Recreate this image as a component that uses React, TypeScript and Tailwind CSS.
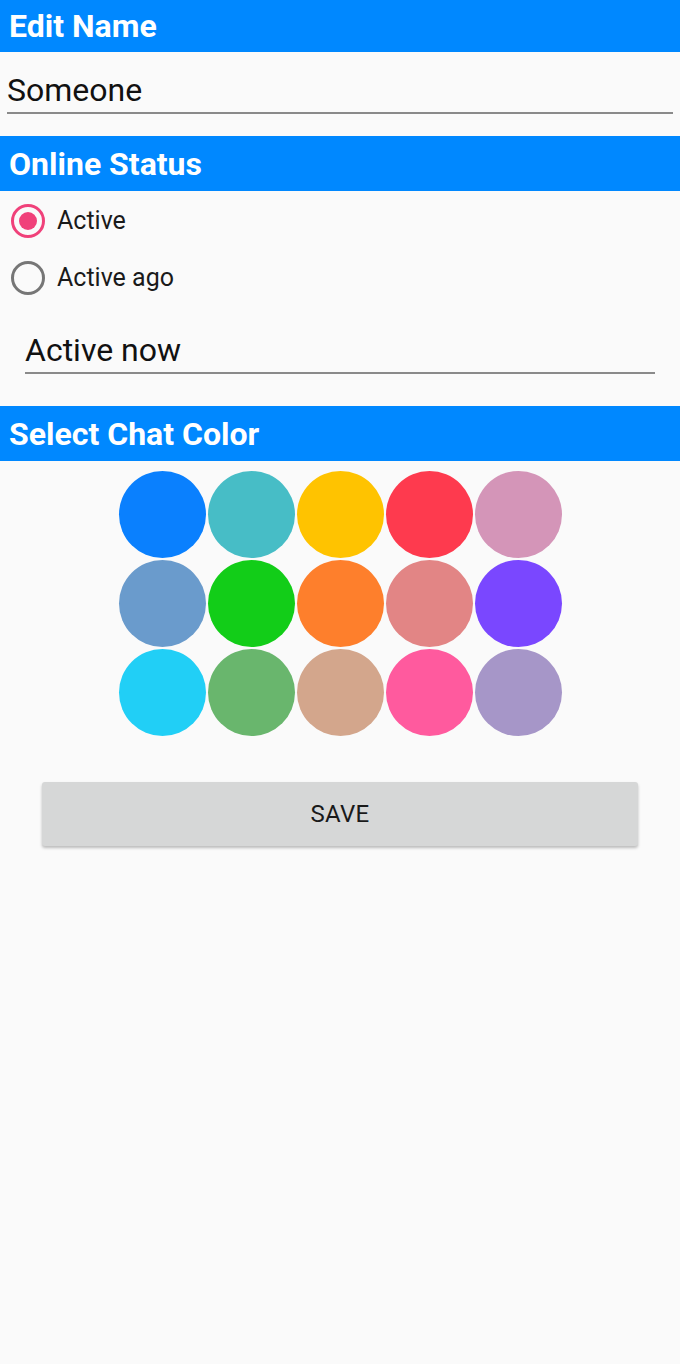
import React, { useState } from 'react';

const COLORS = [
  '#0a80fe', '#47bdc6', '#ffc300', '#fe3a4e', '#d495b8',
  '#6a9bcc', '#12cd18', '#fe7f2c', '#e28585', '#7a47ff',
  '#21cff6', '#69b66d', '#d3a68c', '#ff5a9e', '#a696c8',
];

function SectionHeader({ title, tall = true }: { title: string; tall?: boolean }) {
  return (
    <div className={`${tall ? 'h-[55px]' : 'h-[52px]'} bg-[#0088ff] flex items-center px-[9px]`}>
      <h2 className="text-white font-bold text-[32px] leading-none">{title}</h2>
    </div>
  );
}

function Radio({ label, checked, onClick }: { label: string; checked: boolean; onClick: () => void }) {
  return (
    <button onClick={onClick} className="flex items-center h-[57px] pl-[11px] text-left">
      <span
        className={`w-[34px] h-[34px] rounded-full border-[3px] flex items-center justify-center ${
          checked ? 'border-[#f0417a]' : 'border-[#767676]'
        }`}
      >
        {checked && <span className="w-[18px] h-[18px] rounded-full bg-[#f0417a]" />}
      </span>
      <span className="ml-[12px] text-[25px] leading-none text-[#1a1a1a]">{label}</span>
    </button>
  );
}

export default function App() {
  const [status, setStatus] = useState<'active' | 'ago'>('active');
  const [name, setName] = useState('Someone');
  const [activeText, setActiveText] = useState('Active now');

  return (
    <div className="min-h-[1364px] bg-[#fafafa] font-['Roboto',sans-serif]">
      {/* Edit Name */}
      <SectionHeader title="Edit Name" tall={false} />
      <div className="px-[7px] pt-[20px] pb-[22px]">
        <input
          value={name}
          onChange={(e) => setName(e.target.value)}
          className="w-full bg-transparent outline-none text-[32px] text-[#111] leading-[36px] pb-[4px] border-b-2 border-[#8a8a8a]"
        />
      </div>

      {/* Online Status */}
      <SectionHeader title="Online Status" />
      <div className="flex flex-col pt-[1px]">
        <Radio label="Active" checked={status === 'active'} onClick={() => setStatus('active')} />
        <Radio label="Active ago" checked={status === 'ago'} onClick={() => setStatus('ago')} />
      </div>
      <div className="px-[25px] pt-[26px] pb-[32px]">
        <input
          value={activeText}
          onChange={(e) => setActiveText(e.target.value)}
          className="w-full bg-transparent outline-none text-[32px] text-[#111] leading-[36px] pb-[4px] border-b-2 border-[#8a8a8a]"
        />
      </div>

      {/* Select Chat Color */}
      <SectionHeader title="Select Chat Color" />
      <div className="flex justify-center pt-[10px]">
        <div className="grid grid-cols-5 gap-[2px]">
          {COLORS.map((c) => (
            <button key={c} className="w-[87px] h-[87px] rounded-full" style={{ backgroundColor: c }} />
          ))}
        </div>
      </div>

      <div className="px-[42px] pt-[46px]">
        <button className="w-full h-[64px] bg-[#d6d7d7] rounded-[3px] shadow-[0_2px_3px_rgba(0,0,0,0.25)] text-[24px] text-[#1a1a1a] tracking-[0.3px]">
          SAVE
        </button>
      </div>
    </div>
  );
}
